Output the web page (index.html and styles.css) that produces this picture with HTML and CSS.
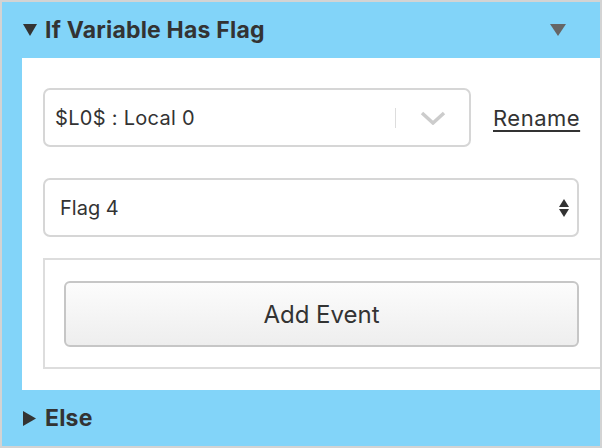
FILE: index.html
```html
<!DOCTYPE html>
<html>
<head>
<meta charset="utf-8">
<link rel="stylesheet" href="styles.css">
</head>
<body>
<div class="block">
  <div class="header">
    <svg class="caret" width="14" height="12" viewBox="0 0 14 12"><polygon points="0,0 14,0 7,12" fill="#333"/></svg>
    <span class="title">If Variable Has Flag</span>
    <svg class="menu" width="16" height="12" viewBox="0 0 16 12"><polygon points="0,0 16,0 8,12" fill="#666"/></svg>
  </div>
  <div class="panel">
    <div class="row">
      <div class="select combo">
        <span class="value">$L0$ : Local 0</span>
        <span class="sep"></span>
        <svg class="chev" width="26" height="14" viewBox="0 0 26 14"><polyline points="2,2 13,12 24,2" fill="none" stroke="#ccc" stroke-width="3.5" stroke-linejoin="miter"/></svg>
      </div>
      <a class="rename">Rename</a>
    </div>
    <div class="select native">
      <span class="value">Flag 4</span>
      <svg class="updown" width="10" height="18" viewBox="0 0 10 18"><polygon points="5,0 10,8 0,8" fill="#333"/><polygon points="0,10 10,10 5,18" fill="#333"/></svg>
    </div>
    <div class="events">
      <div class="addbtn">Add Event</div>
    </div>
  </div>
  <div class="header else">
    <svg class="caret" width="13" height="15" viewBox="0 0 13 15"><polygon points="0,0 13,7.5 0,15" fill="#333"/></svg>
    <span class="title">Else</span>
  </div>
</div>
</body>
</html>
```
FILE: styles.css
```css
html, body {
  margin: 0;
  padding: 0;
}
body {
  font-family: Inter, "Open Sans", "Liberation Sans", sans-serif;
  color: #333;
}
.block {
  width: 602px;
  height: 448px;
  box-sizing: border-box;
  border: 2px solid #d3d3d3;
  background: #82d4f9;
  display: flex;
  flex-direction: column;
}
.header {
  height: 56px;
  display: flex;
  align-items: center;
  padding-left: 21px;
  padding-right: 34px;
  flex-shrink: 0;
}
.caret {
  margin-right: 8px;
  flex-shrink: 0;
}
.title {
  font-weight: 700;
  font-size: 23px;
  letter-spacing: 0.2px;
  color: #333;
  flex: 1;
}
.panel {
  margin-left: 20px;
  background: #fff;
  height: 332px;
  box-sizing: border-box;
  padding: 30px 0 0 21px;
  overflow: hidden;
}
.row {
  display: flex;
  align-items: center;
}
.select {
  height: 59px;
  box-sizing: border-box;
  border: 2px solid #d6d6d6;
  border-radius: 7px;
  display: flex;
  align-items: center;
  padding-left: 10px;
  font-size: 20px;
  color: #333;
}
.combo {
  width: 428px;
}
.combo .value {
  letter-spacing: 0.3px;
}
.value {
  flex: 1;
}
.sep {
  width: 1px;
  height: 20px;
  background: #ddd;
  margin-right: 24px;
}
.chev {
  margin-right: 23px;
}
.rename {
  margin-left: 22px;
  font-size: 22px;
  letter-spacing: 0.5px;
  color: #333;
  text-decoration: underline;
  text-decoration-thickness: 2px;
  text-underline-offset: 4px;
}
.native {
  width: 536px;
  margin-top: 31px;
  padding-left: 15px;
  padding-right: 8px;
}
.events {
  margin-top: 21px;
  width: 600px;
  height: 111px;
  box-sizing: border-box;
  border: 2px solid #dddddd;
  padding: 21px 0 0 19px;
}
.addbtn {
  width: 515px;
  height: 66px;
  box-sizing: border-box;
  border: 2px solid #c6c6c6;
  border-radius: 6px;
  background: linear-gradient(#fcfcfc, #eeeeee);
  display: flex;
  align-items: center;
  justify-content: center;
  font-size: 24px;
  color: #333;
}
.else .caret {
  margin-right: 9px;
}
```
